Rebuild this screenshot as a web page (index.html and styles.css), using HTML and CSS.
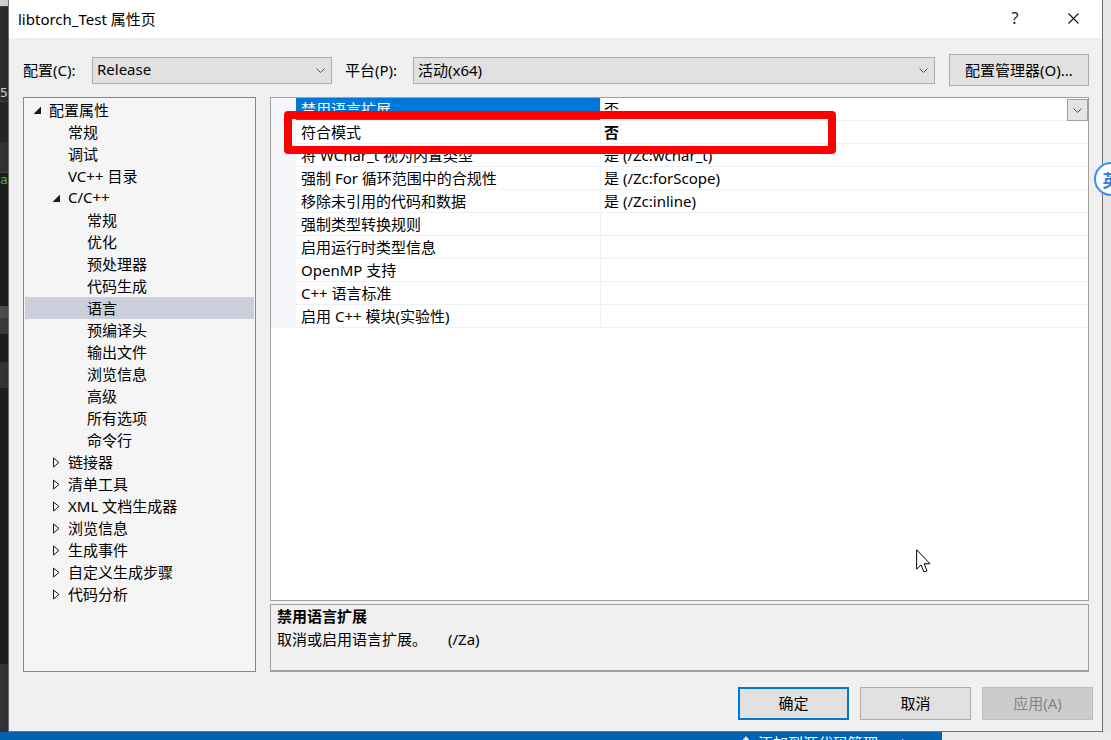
FILE: index.html
```html
<!DOCTYPE html>
<html lang="zh-CN">
<head>
<meta charset="utf-8">
<title>libtorch_Test 属性页</title>
<link rel="stylesheet" href="styles.css">
</head>
<body>
<div class="screen">
  <div class="top">
    <div class="editor-strip">
      <div class="es es-a"></div>
      <div class="es es-b"></div>
      <div class="es es-c">5</div>
      <div class="es es-d"></div>
      <div class="es es-e"></div>
      <div class="es es-f">ai</div>
      <div class="es es-g"></div>
      <div class="es es-h"></div>
      <div class="es es-i"></div>
      <div class="es es-j"></div>
      <div class="es es-k"></div>
      <div class="es es-l"></div>
      <div class="es es-m"></div>
    </div>

    <div class="dialog">
      <div class="titlebar">
        <div class="title">libtorch_Test 属性页</div>
        <div class="tb-btn help">?</div>
        <div class="tb-btn close">
          <svg width="11" height="11" viewBox="0 0 11 11"><path d="M0.5 0.5 L10.5 10.5 M10.5 0.5 L0.5 10.5" stroke="#111" stroke-width="1.1" fill="none"/></svg>
        </div>
      </div>

      <div class="dlg-body">
        <div class="cfg-row">
          <div class="lbl lbl1">配置(C):</div>
          <div class="combo combo1">
            <span class="combo-text">Release</span>
            <svg class="chev" width="9" height="5" viewBox="0 0 9 5"><path d="M0.5 0.5 L4.5 4.5 L8.5 0.5" stroke="#555" stroke-width="1" fill="none"/></svg>
          </div>
          <div class="lbl lbl2">平台(P):</div>
          <div class="combo combo2">
            <span class="combo-text">活动(x64)</span>
            <svg class="chev" width="9" height="5" viewBox="0 0 9 5"><path d="M0.5 0.5 L4.5 4.5 L8.5 0.5" stroke="#555" stroke-width="1" fill="none"/></svg>
          </div>
          <div class="btn cfg-btn">配置管理器(O)...</div>
        </div>

        <div class="main">
          <div class="tree">
            <div class="tree-row l0"><span class="tw"><svg width="17" height="22" viewBox="0 0 17 22"><polygon points="9,7.5 9,15 1.5,15" fill="#1a1a1a"/></svg></span><span class="tt">配置属性</span></div>
            <div class="tree-row l1"><span class="tw"></span><span class="tt">常规</span></div>
            <div class="tree-row l1"><span class="tw"></span><span class="tt">调试</span></div>
            <div class="tree-row l1"><span class="tw"></span><span class="tt">VC++ 目录</span></div>
            <div class="tree-row l1"><span class="tw"><svg width="17" height="22" viewBox="0 0 17 22"><polygon points="9,7.5 9,15 1.5,15" fill="#1a1a1a"/></svg></span><span class="tt">C/C++</span></div>
            <div class="tree-row l2"><span class="tw"></span><span class="tt">常规</span></div>
            <div class="tree-row l2"><span class="tw"></span><span class="tt">优化</span></div>
            <div class="tree-row l2"><span class="tw"></span><span class="tt">预处理器</span></div>
            <div class="tree-row l2"><span class="tw"></span><span class="tt">代码生成</span></div>
            <div class="tree-row l2 sel"><span class="tw"></span><span class="tt">语言</span></div>
            <div class="tree-row l2"><span class="tw"></span><span class="tt">预编译头</span></div>
            <div class="tree-row l2"><span class="tw"></span><span class="tt">输出文件</span></div>
            <div class="tree-row l2"><span class="tw"></span><span class="tt">浏览信息</span></div>
            <div class="tree-row l2"><span class="tw"></span><span class="tt">高级</span></div>
            <div class="tree-row l2"><span class="tw"></span><span class="tt">所有选项</span></div>
            <div class="tree-row l2"><span class="tw"></span><span class="tt">命令行</span></div>
            <div class="tree-row l1"><span class="tw"><svg width="17" height="22" viewBox="0 0 17 22"><polygon points="2.5,7 8,11.5 2.5,16" fill="none" stroke="#1a1a1a" stroke-width="1"/></svg></span><span class="tt">链接器</span></div>
            <div class="tree-row l1"><span class="tw"><svg width="17" height="22" viewBox="0 0 17 22"><polygon points="2.5,7 8,11.5 2.5,16" fill="none" stroke="#1a1a1a" stroke-width="1"/></svg></span><span class="tt">清单工具</span></div>
            <div class="tree-row l1"><span class="tw"><svg width="17" height="22" viewBox="0 0 17 22"><polygon points="2.5,7 8,11.5 2.5,16" fill="none" stroke="#1a1a1a" stroke-width="1"/></svg></span><span class="tt">XML 文档生成器</span></div>
            <div class="tree-row l1"><span class="tw"><svg width="17" height="22" viewBox="0 0 17 22"><polygon points="2.5,7 8,11.5 2.5,16" fill="none" stroke="#1a1a1a" stroke-width="1"/></svg></span><span class="tt">浏览信息</span></div>
            <div class="tree-row l1"><span class="tw"><svg width="17" height="22" viewBox="0 0 17 22"><polygon points="2.5,7 8,11.5 2.5,16" fill="none" stroke="#1a1a1a" stroke-width="1"/></svg></span><span class="tt">生成事件</span></div>
            <div class="tree-row l1"><span class="tw"><svg width="17" height="22" viewBox="0 0 17 22"><polygon points="2.5,7 8,11.5 2.5,16" fill="none" stroke="#1a1a1a" stroke-width="1"/></svg></span><span class="tt">自定义生成步骤</span></div>
            <div class="tree-row l1"><span class="tw"><svg width="17" height="22" viewBox="0 0 17 22"><polygon points="2.5,7 8,11.5 2.5,16" fill="none" stroke="#1a1a1a" stroke-width="1"/></svg></span><span class="tt">代码分析</span></div>
          </div>

          <div class="right-col">
            <div class="grid">
              <div class="g-row">
                <div class="g-gut"></div>
                <div class="g-name sel">禁用语言扩展</div>
                <div class="g-val"><span class="v">否</span>
                  <div class="dd"><svg width="9" height="5" viewBox="0 0 9 5"><path d="M0.5 0.5 L4.5 4.5 L8.5 0.5" stroke="#555" stroke-width="1" fill="none"/></svg></div>
                </div>
              </div>
              <div class="g-row">
                <div class="g-gut"></div>
                <div class="g-name">符合模式</div>
                <div class="g-val"><span class="v bold">否</span></div>
              </div>
              <div class="g-row">
                <div class="g-gut"></div>
                <div class="g-name">将 WChar_t 视为内置类型</div>
                <div class="g-val"><span class="v">是 (/Zc:wchar_t)</span></div>
              </div>
              <div class="g-row">
                <div class="g-gut"></div>
                <div class="g-name">强制 For 循环范围中的合规性</div>
                <div class="g-val"><span class="v">是 (/Zc:forScope)</span></div>
              </div>
              <div class="g-row">
                <div class="g-gut"></div>
                <div class="g-name">移除未引用的代码和数据</div>
                <div class="g-val"><span class="v">是 (/Zc:inline)</span></div>
              </div>
              <div class="g-row">
                <div class="g-gut"></div>
                <div class="g-name">强制类型转换规则</div>
                <div class="g-val"></div>
              </div>
              <div class="g-row">
                <div class="g-gut"></div>
                <div class="g-name">启用运行时类型信息</div>
                <div class="g-val"></div>
              </div>
              <div class="g-row">
                <div class="g-gut"></div>
                <div class="g-name">OpenMP 支持</div>
                <div class="g-val"></div>
              </div>
              <div class="g-row">
                <div class="g-gut"></div>
                <div class="g-name">C++ 语言标准</div>
                <div class="g-val"></div>
              </div>
              <div class="g-row">
                <div class="g-gut"></div>
                <div class="g-name">启用 C++ 模块(实验性)</div>
                <div class="g-val"></div>
              </div>
              <div class="red-box"></div>
            </div>
            <div class="desc">
              <div class="desc-title">禁用语言扩展</div>
              <div class="desc-text">取消或启用语言扩展。<span class="desc-flag">(/Za)</span></div>
            </div>
          </div>
        </div>

        <div class="btn-row">
          <div class="btn dlg-btn default">确定</div>
          <div class="btn dlg-btn">取消</div>
          <div class="btn dlg-btn disabled">应用(A)</div>
        </div>
      </div>
    </div>

    <div class="right-strip"></div>
  </div>

  <div class="status">
    <div class="status-blue">
      <div class="status-item">
        <svg width="12" height="12" viewBox="0 0 12 12"><path d="M6 1 L11 7 L8 7 L8 11 L4 11 L4 7 L1 7 Z" fill="#dfe9f5"/></svg>
        <span>添加到源代码管理</span>
        <span class="status-caret">▲</span>
      </div>
    </div>
    <div class="status-rest"></div>
  </div>
</div>

<div class="ime-badge"><span>英</span></div>

<svg class="cursor" width="15" height="24" viewBox="0 0 12 19">
  <path d="M0.5 0.5 L0.5 16 L4 12.6 L6.4 18.3 L8.8 17.3 L6.5 11.7 L11.2 11.7 Z" fill="#fff" stroke="#000" stroke-width="0.8" stroke-linejoin="round"/>
</svg>
</body>
</html>
```

FILE: styles.css
```css
* {
  box-sizing: border-box;
}

html, body {
  margin: 0;
  padding: 0;
}

body {
  width: 1111px;
  height: 740px;
  overflow: hidden;
  position: relative;
  background: #ececec;
  font-family: "Noto Sans", "Noto Sans CJK SC", sans-serif;
  font-size: 15px;
  color: #000;
}

.screen {
  display: flex;
  flex-direction: column;
  height: 740px;
}

.top {
  display: flex;
  height: 732px;
}

/* dark editor behind the dialog */
.editor-strip {
  width: 8px;
  display: flex;
  flex-direction: column;
  background: #1e1e1e;
  overflow: hidden;
  font-family: "DejaVu Sans Mono", monospace;
  font-size: 13px;
  line-height: 14px;
}

.es { width: 8px; }
.es-a { height: 6px; background: #cfcfcf; }
.es-b { height: 80px; background: #2d2d30; border-top: 1px solid #3f3f46; }
.es-c { height: 16px; background: #2d2d30; color: #d0d0d0; border-bottom: 1px solid #3f3f46; }
.es-d { height: 40px; background: #252526; }
.es-e { height: 30px; background: #333337; }
.es-f { height: 16px; background: #1e1e1e; color: #57a64a; border-top: 1px solid #444; }
.es-g { height: 118px; background: #1e1e1e; }
.es-h { height: 12px; background: #4d4d50; }
.es-i { height: 16px; background: #3a3a3d; }
.es-j { height: 28px; background: #1e1e1e; }
.es-k { height: 26px; background: #333337; }
.es-l { height: 276px; background: #1e1e1e; }
.es-m { flex: 1; background: #333337; }

/* dialog */
.dialog {
  width: 1095px;
  height: 732px;
  display: flex;
  flex-direction: column;
  background: #f0f0f0;
  border: 1px solid #707070;
  border-top: 0;
  box-shadow: 2px 2px 6px rgba(0, 0, 0, 0.25);
}

.titlebar {
  height: 38px;
  background: #fff;
  display: flex;
  align-items: center;
  padding-left: 9px;
  padding-bottom: 2px;
}

.title {
  flex: 1;
  font-size: 15px;
  color: #000;
}

.tb-btn {
  width: 58px;
  height: 36px;
  display: flex;
  align-items: center;
  justify-content: center;
}

.help {
  font-size: 16px;
  color: #222;
}

.dlg-body {
  flex: 1;
  display: flex;
  flex-direction: column;
  padding: 16px 13px 11px 14px;
}

/* config row */
.cfg-row {
  display: flex;
  align-items: center;
  height: 32px;
}

.lbl {
  white-space: nowrap;
  padding-bottom: 2px;
}

.lbl1 { width: 69px; }
.lbl2 { width: 68px; }

.combo {
  height: 27px;
  display: flex;
  align-items: center;
  background: #e1e1e1;
  border: 1px solid #adadad;
  padding-left: 4px;
  padding-right: 6px;
}

.combo1 { width: 240px; margin-right: 13px; }
.combo2 { width: 522px; margin-right: 14px; }

.combo-text {
  flex: 1;
  padding-bottom: 2px;
}

.chev {
  display: block;
}

.btn {
  display: flex;
  align-items: center;
  justify-content: center;
  background: #e1e1e1;
  border: 1px solid #adadad;
  white-space: nowrap;
  padding-bottom: 2px;
}

.cfg-btn {
  width: 140px;
  height: 32px;
}

/* main area */
.main {
  display: flex;
  gap: 14px;
  margin-top: 11px;
  height: 575px;
}

.tree {
  width: 233px;
  border: 1px solid #828790;
  background: #f5f5f5;
  padding: 1px;
}

.tree-row {
  height: 22px;
  display: flex;
  align-items: center;
  white-space: nowrap;
}

.tree-row.l0 { padding-left: 7px; }
.tree-row.l1 { padding-left: 26px; }
.tree-row.l2 { padding-left: 45px; }

.tree-row.sel {
  background: #cccedb;
}

.tt {
  margin-bottom: 2px;
}

.tw {
  width: 17px;
  height: 22px;
  flex: none;
}

.tw svg {
  display: block;
}

.right-col {
  flex: 1;
  display: flex;
  flex-direction: column;
  gap: 3px;
}

.grid {
  height: 504px;
  border: 1px solid #a0a0a0;
  background: #fff;
  position: relative;
}

.g-row {
  display: flex;
  height: 23px;
}

.g-gut {
  width: 25px;
  background: #f5f6fa;
}

.g-name {
  width: 304px;
  padding-left: 5px;
  line-height: 22px;
  border-bottom: 1px solid #edf0f6;
  white-space: nowrap;
  overflow: hidden;
}

.g-name.sel {
  background: #0078d7;
  color: #fff;
}

.g-val {
  flex: 1;
  display: flex;
  align-items: flex-start;
  padding-left: 3px;
  line-height: 22px;
  border-left: 1px solid #edf0f6;
  border-bottom: 1px solid #edf0f6;
  white-space: nowrap;
}

.v {
  flex: 1;
}

.bold {
  font-weight: bold;
}

.dd {
  width: 21px;
  height: 22px;
  margin-top: 1px;
  display: flex;
  align-items: center;
  justify-content: center;
  background: #e5e5e5;
  border: 1px solid #a0a0a0;
}

.dd svg {
  display: block;
}

.red-box {
  position: absolute;
  left: 13px;
  top: 13px;
  width: 552px;
  height: 43px;
  border: 8px solid #ff0000;
  border-radius: 4px;
}

.desc {
  flex: 1;
  border: 1px solid #a0a0a0;
  border-bottom-width: 2px;
  padding: 0 6px;
  line-height: 23px;
}

.desc-title {
  font-weight: bold;
}

.desc-flag {
  margin-left: 21px;
}

/* buttons */
.btn-row {
  display: flex;
  justify-content: flex-end;
  gap: 11px;
  margin-top: 15px;
  margin-right: -4px;
  height: 33px;
}

.dlg-btn {
  width: 111px;
  height: 33px;
}

.dlg-btn.default {
  border: 2px solid #0078d7;
}

.dlg-btn.disabled {
  background: #cccccc;
  border-color: #bfbfbf;
  color: #838383;
}

.right-strip {
  width: 8px;
  background: #e6e6e6;
}

/* VS status bar below */
.status {
  height: 8px;
  display: flex;
}

.status-blue {
  width: 942px;
  background: #0063b1;
  overflow: hidden;
  color: #fff;
  padding-left: 740px;
}

.status-item {
  display: flex;
  align-items: flex-start;
  gap: 6px;
  margin-top: 1px;
  line-height: 20px;
  white-space: nowrap;
}

.status-item svg {
  margin-top: 2px;
}

.status-caret {
  font-size: 9px;
  margin-left: 14px;
}

.status-rest {
  flex: 1;
  background: #ececec;
}

/* overlays */
.ime-badge {
  position: absolute;
  left: 1094px;
  top: 162px;
  width: 34px;
  height: 34px;
  border-radius: 50%;
  border: 2px solid #3b8ff0;
  background: #fff;
  color: #2a7de1;
  display: flex;
  align-items: center;
  justify-content: center;
  font-size: 17px;
  font-weight: bold;
  font-family: "Noto Sans CJK SC", sans-serif;
}

.cursor {
  position: absolute;
  left: 916px;
  top: 549px;
}
```
